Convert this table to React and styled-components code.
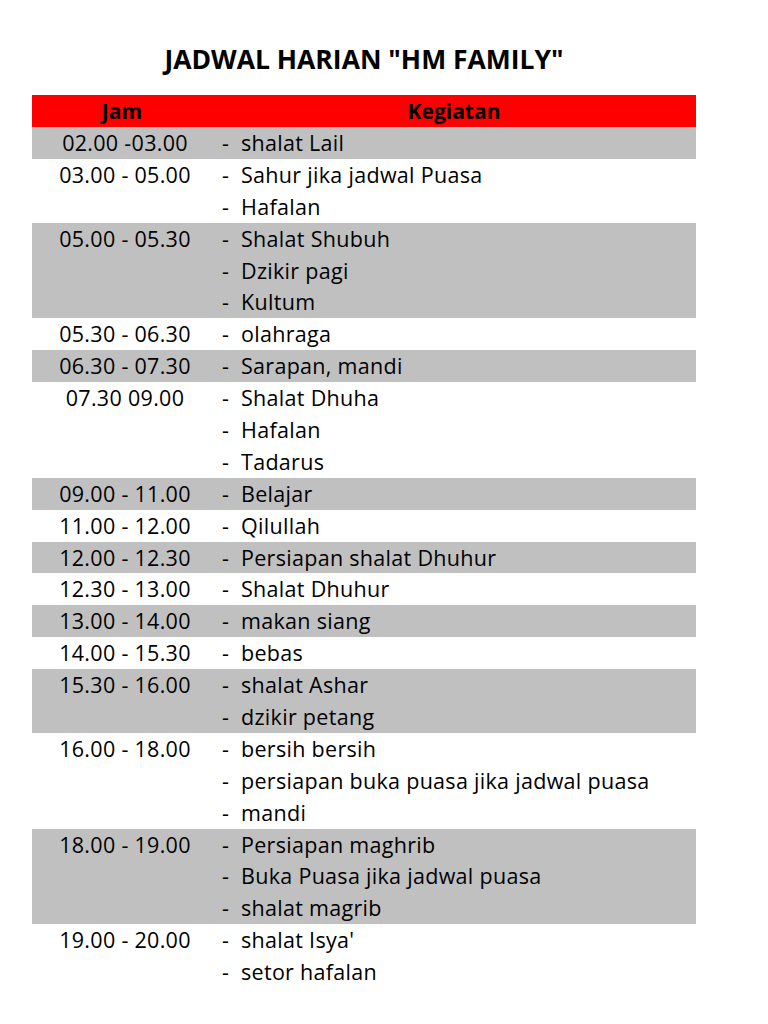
import React from "react";
import styled, { createGlobalStyle } from "styled-components";

const GlobalStyle = createGlobalStyle`
  body {
    margin: 0;
    background: #ffffff;
    font-family: "Open Sans", "Liberation Sans", sans-serif;
    color: #000;
  }
`;

const Page = styled.div`
  width: 768px;
  height: 1024px;
  padding: 42px 72px 0 32px;
  box-sizing: border-box;
`;

const Title = styled.h1`
  margin: 0 0 18px 0;
  height: 35px;
  line-height: 35px;
  text-align: center;
  font-size: 26.5px;
  font-weight: 700;
`;

const Table = styled.div`
  width: 664px;
`;

const Header = styled.div`
  display: grid;
  grid-template-columns: 180px 1fr;
  height: 32px;
  align-items: center;
  background: #ff0000;
  font-size: 21px;
  font-weight: 700;
`;

const HeaderCell = styled.div`
  text-align: center;
`;

const Row = styled.div`
  display: grid;
  grid-template-columns: 184px 1fr;
  background: ${(p) => (p.$shade ? "#c0c0c0" : "transparent")};
  font-size: 21.5px;
  letter-spacing: 0.3px;
`;

const Time = styled.div`
  height: 31.9px;
  line-height: 31.9px;
  text-align: center;
  padding-left: 2px;
`;

const Items = styled.ul`
  list-style: none;
  margin: 0;
  padding: 0;
`;

const Item = styled.li`
  display: flex;
  height: 31.9px;
  line-height: 31.9px;
  &::before {
    content: "-";
    width: 19px;
    padding-left: 6px;
  }
`;

const schedule = [
  ["02.00 -03.00", ["shalat Lail"]],
  ["03.00 - 05.00", ["Sahur jika jadwal Puasa", "Hafalan"]],
  ["05.00 - 05.30", ["Shalat Shubuh", "Dzikir pagi", "Kultum"]],
  ["05.30 - 06.30", ["olahraga"]],
  ["06.30 - 07.30", ["Sarapan, mandi"]],
  ["07.30 09.00", ["Shalat Dhuha", "Hafalan", "Tadarus"]],
  ["09.00 - 11.00", ["Belajar"]],
  ["11.00 - 12.00", ["Qilullah"]],
  ["12.00 - 12.30", ["Persiapan shalat Dhuhur"]],
  ["12.30 - 13.00", ["Shalat Dhuhur"]],
  ["13.00 - 14.00", ["makan siang"]],
  ["14.00 - 15.30", ["bebas"]],
  ["15.30 - 16.00", ["shalat Ashar", "dzikir petang"]],
  ["16.00 - 18.00", ["bersih bersih", "persiapan buka puasa jika jadwal puasa", "mandi"]],
  ["18.00 - 19.00", ["Persiapan maghrib", "Buka Puasa jika jadwal puasa", "shalat magrib"]],
  ["19.00 - 20.00", ["shalat Isya'", "setor hafalan"]],
];

export default function App() {
  return (
    <Page>
      <GlobalStyle />
      <Title>JADWAL HARIAN "HM FAMILY"</Title>
      <Table>
        <Header>
          <HeaderCell>Jam</HeaderCell>
          <HeaderCell>Kegiatan</HeaderCell>
        </Header>
        {schedule.map(([time, items], i) => (
          <Row key={time} $shade={i % 2 === 0}>
            <Time>{time}</Time>
            <Items>
              {items.map((item) => (
                <Item key={item}>{item}</Item>
              ))}
            </Items>
          </Row>
        ))}
      </Table>
    </Page>
  );
}
